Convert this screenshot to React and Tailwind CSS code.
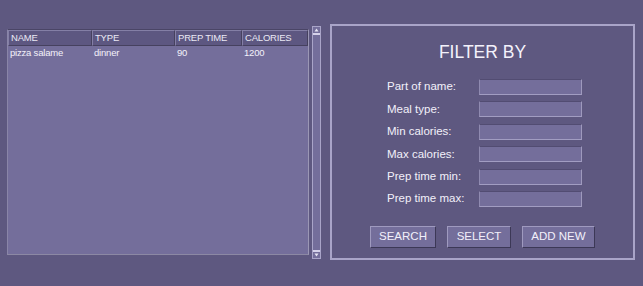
const columns = [
  { label: 'NAME', w: 'w-[84px]' },
  { label: 'TYPE', w: 'w-[83px]' },
  { label: 'PREP TIME', w: 'w-[67px]' },
  { label: 'CALORIES', w: 'flex-1' },
]

const rows = [['pizza salame', 'dinner', '90', '1200']]

const filters = ['Part of name:', 'Meal type:', 'Min calories:', 'Max calories:', 'Prep time min:', 'Prep time max:']

function Btn({ children, w }) {
  return (
    <button
      className={`${w} h-[22px] bg-[#746e9b] text-[#f2f0fa] text-[11.5px] border border-t-[#9f9abf] border-l-[#9f9abf] border-r-[#3c3856] border-b-[#3c3856]`}
    >
      {children}
    </button>
  )
}

export default function App() {
  return (
    <div
      className="w-[643px] h-[286px] bg-[#5e5880] flex items-start pl-[7px] pt-[24px]"
      style={{ fontFamily: '"Liberation Sans", Arial, sans-serif' }}
    >
      {/* Table */}
      <div className="mt-[5px] w-[302px] h-[226px] bg-[#746e9b] border border-t-[#4a4566] border-l-[#8a85a8] border-r-[#9b97b5] border-b-[#8c88a4] flex flex-col">
        <div className="flex h-[16px] bg-[#5d5781]">
          {columns.map((c, i) => (
            <div
              key={i}
              className={`${c.w} h-full px-[2px] flex items-center text-[9.5px] tracking-[-0.2px] text-[#ebe9f5] border border-t-[#847fa6] border-l-[#847fa6] border-r-[#46415f] border-b-[#46415f]`}
            >
              {c.label}
            </div>
          ))}
        </div>
        {rows.map((r, i) => (
          <div key={i} className="flex h-[15px]">
            {r.map((v, j) => (
              <div key={j} className={`${columns[j].w} px-[2px] flex items-center text-[9.5px] tracking-[-0.2px] text-[#f3f1fa]`}>
                {v}
              </div>
            ))}
          </div>
        ))}
      </div>

      {/* Scrollbar */}
      <div className="ml-[3px] mt-[2px] w-[9px] h-[233px] border border-[#a9a4c8] bg-[#746e9b] flex flex-col items-center">
        <div className="w-full h-[8px] flex flex-col items-center justify-end border-b-2 border-[#d6d2ea]">
          <svg width="5" height="4" viewBox="0 0 5 4" className="mb-[1px]">
            <path d="M2.5 0.5 L4.5 3.5 L0.5 3.5 Z" fill="#e8e6f4" />
          </svg>
        </div>
        <div className="flex-1" />
        <div className="w-full h-[8px] flex flex-col items-center justify-start border-t-2 border-[#d6d2ea]">
          <svg width="5" height="4" viewBox="0 0 5 4" className="mt-[1px]">
            <path d="M0.5 0.5 L4.5 0.5 L2.5 3.5 Z" fill="#e8e6f4" />
          </svg>
        </div>
      </div>

      {/* Filter panel */}
      <div className="ml-[9px] w-[305px] h-[236px] border-2 border-[#a9a4c8] flex flex-col items-center pt-[16px]">
        <h1 className="text-[17.5px] leading-[20px] text-[#f4f2fb]">FILTER BY</h1>
        <div className="mt-[17px] flex flex-col gap-[6.4px] self-start ml-[55px]">
          {filters.map((f) => (
            <div key={f} className="flex items-center h-[16px]">
              <span className="w-[92px] text-[11.5px] text-[#f2f0fa]">{f}</span>
              <div className="w-[103px] h-[16px] bg-[#746e9b] border border-t-[#524c72] border-l-[#8f8ab0] border-r-[#9e99bd] border-b-[#a29dc2]" />
            </div>
          ))}
        </div>
        <div className="mt-[19px] flex gap-[11px]">
          <Btn w="w-[66px]">SEARCH</Btn>
          <Btn w="w-[64px]">SELECT</Btn>
          <Btn w="w-[73px]">ADD NEW</Btn>
        </div>
      </div>
    </div>
  )
}
